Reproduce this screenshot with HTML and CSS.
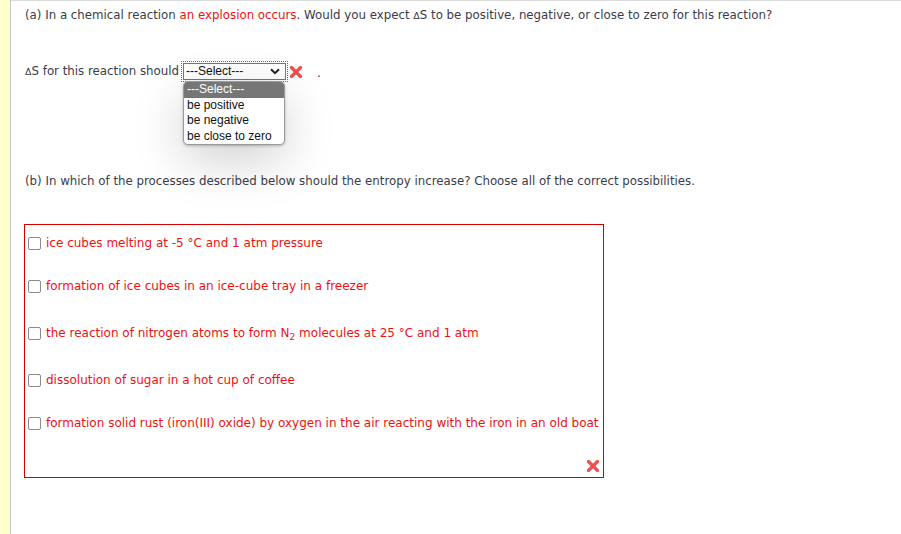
FILE: index.html
```html
<!DOCTYPE html>
<html>
<head>
<meta charset="utf-8">
<link rel="stylesheet" href="styles.css">
</head>
<body>
<div class="page">
  <div class="strip"></div>
  <div class="content">
    <p class="q qa">(a) In a chemical reaction <span class="red">an explosion occurs</span>. Would you expect <span class="delta">&Delta;</span>S to be positive, negative, or close to zero for this reaction?</p>
    <div class="answer">
      <span class="lbl"><span class="delta">&Delta;</span>S for this reaction should</span>
      <span class="selwrap">
        <span class="select"><span class="seltext">---Select---</span>
          <svg class="chev" width="10" height="7" viewBox="0 0 10 7"><path d="M1 1.2 L5 5.2 L9 1.2" fill="none" stroke="#222" stroke-width="2"/></svg>
        </span>
        <span class="list">
          <span class="opt hi">---Select---</span>
          <span class="opt">be positive</span>
          <span class="opt">be negative</span>
          <span class="opt">be close to zero</span>
        </span>
      </span>
      <svg class="x" width="12" height="12" viewBox="0 0 12 12"><path d="M1.5 1.5 L10.5 10.5 M10.5 1.5 L1.5 10.5" stroke="#ee4f4f" stroke-width="3.2" stroke-linecap="round"/></svg>
      <span class="dot">.</span>
    </div>
    <p class="q qb">(b) In which of the processes described below should the entropy increase? Choose all of the correct possibilities.</p>
    <div class="box">
      <div class="items">
        <label class="item"><span class="cb"></span><span class="red">ice cubes melting at -5 &deg;C and 1 atm pressure</span></label>
        <label class="item"><span class="cb"></span><span class="red">formation of ice cubes in an ice-cube tray in a freezer</span></label>
        <label class="item tall"><span class="cb"></span><span class="red">the reaction of nitrogen atoms to form N<sub>2</sub> molecules at 25 &deg;C and 1 atm</span></label>
        <label class="item"><span class="cb"></span><span class="red">dissolution of sugar in a hot cup of coffee</span></label>
        <label class="item"><span class="cb"></span><span class="red">formation solid rust (iron(III) oxide) by oxygen in the air reacting with the iron in an old boat</span></label>
      </div>
      <div class="xrow">
        <svg class="x" width="12" height="12" viewBox="0 0 12 12"><path d="M1.5 1.5 L10.5 10.5 M10.5 1.5 L1.5 10.5" stroke="#ee4f4f" stroke-width="3.2" stroke-linecap="round"/></svg>
      </div>
    </div>
  </div>
</div>
</body>
</html>
```
FILE: styles.css
```css
html, body {
  margin: 0;
  padding: 0;
  background: #fff;
}
.page {
  display: flex;
  width: 901px;
  height: 534px;
  overflow: hidden;
}
.strip {
  width: 10px;
  flex: none;
  background: #ffffcc;
  border-right: 1px solid #c8c8c8;
}
.content {
  flex: 1;
  border-top: 1px solid #dcdcdc;
  padding: 7px 0 0 14px;
  font-family: "DejaVu Sans", Verdana, sans-serif;
  font-size: 11.8px;
  line-height: 15px;
  color: #3b3b4b;
}
.q {
  margin: 0;
}
.red {
  color: #ee1111;
}
.delta {
  font-size: 9.5px;
}
.answer {
  display: flex;
  align-items: center;
  margin-top: 39px;
  height: 19px;
}
.lbl {
  margin-right: 3px;
}
.selwrap {
  position: relative;
  display: inline-block;
  outline: 1px dotted #1976d2;
  outline-offset: 1px;
  margin-left: 1px;
}
.select {
  display: flex;
  align-items: center;
  justify-content: space-between;
  box-sizing: border-box;
  width: 103px;
  height: 17px;
  border: 1px solid #767676;
  padding: 0 5px 0 2px;
  font-family: "Liberation Sans", Arial, sans-serif;
  font-size: 12px;
  color: #111;
  background: #fff;
}
.chev {
  display: block;
}
.list {
  position: absolute;
  left: 0;
  top: 18px;
  width: 102px;
  box-sizing: border-box;
  display: flex;
  flex-direction: column;
  background: #fff;
  border: 1px solid #9a9a9a;
  border-radius: 5px;
  overflow: hidden;
  box-shadow: 0 1px 3px rgba(0,0,0,.25), 0 16px 50px rgba(0,0,0,.18);
  font-family: "Liberation Sans", Arial, sans-serif;
  font-size: 12px;
  line-height: 15.5px;
  color: #111;
  z-index: 5;
}
.opt {
  padding-left: 3px;
  white-space: nowrap;
}
.opt.hi {
  background: #767676;
  color: #fff;
}
.x {
  display: block;
  margin-left: 4px;
}
.dot {
  margin-left: 15px;
  padding-top: 4px;
}
.qb {
  margin-top: 93px;
}
.box {
  margin-top: 35px;
  margin-left: -1px;
  width: 580px;
  height: 254px;
  box-sizing: border-box;
  border: 1px solid #d40000;
  padding: 10px 4px 5px 3px;
  display: flex;
  flex-direction: column;
}
.items {
  display: flex;
  flex-direction: column;
  gap: 27px;
  font-size: 12px;
}
.item {
  display: flex;
  align-items: center;
  height: 16px;
  white-space: nowrap;
}
.item.tall {
  padding: 4px 0;
}
.item sub {
  font-size: 9px;
  line-height: 0;
  vertical-align: -3px;
}
.cb {
  width: 11px;
  height: 11px;
  border: 1px solid #8a8a8a;
  border-radius: 2px;
  margin-right: 5px;
  flex: none;
  background: #fff;
}
.xrow {
  margin-top: auto;
  display: flex;
  justify-content: flex-end;
}
```
